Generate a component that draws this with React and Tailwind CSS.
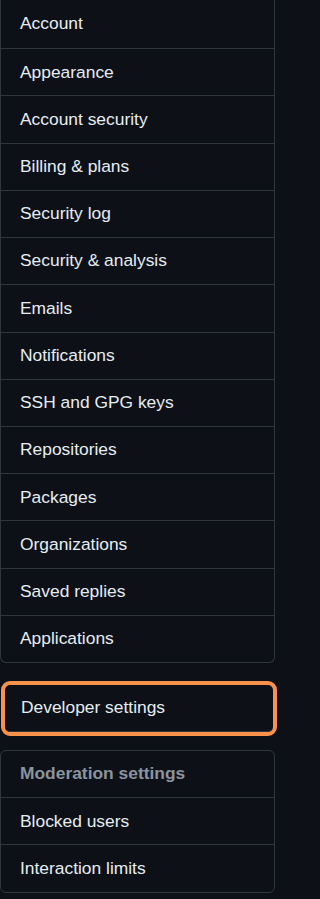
const MAIN_ITEMS = [
  'Account',
  'Appearance',
  'Account security',
  'Billing & plans',
  'Security log',
  'Security & analysis',
  'Emails',
  'Notifications',
  'SSH and GPG keys',
  'Repositories',
  'Packages',
  'Organizations',
  'Saved replies',
  'Applications',
]

const MODERATION_ITEMS = ['Blocked users', 'Interaction limits']

function MenuRow({ label, first }) {
  return (
    <a
      href="#"
      className={`flex items-center h-[46.22px] box-content pl-[19px] text-[#e6edf3] ${first ? '' : 'border-t border-[#30363d]'}`}
    >
      {label}
    </a>
  )
}

export default function App() {
  return (
    <div
      className="min-h-screen w-full bg-[#0d1117] text-[17.4px] leading-none"
      style={{ fontFamily: '"Liberation Sans", Arial, sans-serif' }}
    >
      {/* Main settings menu (top edge scrolled out of view) */}
      <nav className="w-[275px] border border-t-0 border-[#30363d] rounded-b-md">
        <a href="#" className="flex items-center h-[48.2px] pl-[19px] text-[#e6edf3]">
          {MAIN_ITEMS[0]}
        </a>
        {MAIN_ITEMS.slice(1).map((item) => (
          <MenuRow key={item} label={item} />
        ))}
      </nav>

      {/* Developer settings (highlighted) */}
      <div className="mt-[18px] ml-px w-[276px] border-4 border-[#f8924a] rounded-[9px]">
        <a
          href="#"
          className="flex items-center h-[47px] pl-4 text-[#e6edf3] border-b border-[#30363d] rounded-b-[5px]"
        >
          Developer settings
        </a>
      </div>

      {/* Moderation */}
      <nav className="mt-[14px] w-[275px] border border-[#30363d] rounded-md">
        <div className="flex items-center h-[46.22px] box-content pl-[19px] font-bold text-[#8b949e]">
          Moderation settings
        </div>
        {MODERATION_ITEMS.map((item) => (
          <MenuRow key={item} label={item} />
        ))}
      </nav>
    </div>
  )
}
